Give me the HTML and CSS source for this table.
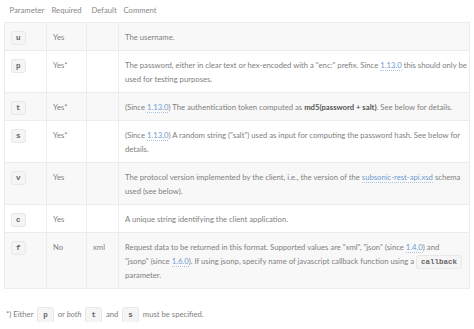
FILE: index.html
```html
<!DOCTYPE html>
<html lang="en">
<head>
    <meta charset="UTF-8">
    <link rel="stylesheet" href="styles.css">
    <title>Request parameters</title>
</head>
<body>
    <table class="params">
        <thead>
            <tr>
                <th class="col-param">Parameter</th>
                <th class="col-req">Required</th>
                <th class="col-def">Default</th>
                <th>Comment</th>
            </tr>
        </thead>
        <tbody>
            <tr>
                <td><code>u</code></td>
                <td>Yes</td>
                <td></td>
                <td>The username.</td>
            </tr>
            <tr>
                <td><code>p</code></td>
                <td>Yes*</td>
                <td></td>
                <td>The password, either in clear text or hex-encoded with a "enc:" prefix. Since <a href="#">1.13.0</a> this should only be used for testing purposes.</td>
            </tr>
            <tr>
                <td><code>t</code></td>
                <td>Yes*</td>
                <td></td>
                <td>(Since <a href="#">1.13.0</a>) The authentication token computed as <b>md5(password + salt)</b>. See below for details.</td>
            </tr>
            <tr>
                <td><code>s</code></td>
                <td>Yes*</td>
                <td></td>
                <td>(Since <a href="#">1.13.0</a>) A random string ("salt") used as input for computing the password hash. See below for details.</td>
            </tr>
            <tr>
                <td><code>v</code></td>
                <td>Yes</td>
                <td></td>
                <td>The protocol version implemented by the client, i.e., the version of the <a href="#">subsonic-rest-api.xsd</a> schema used (see below).</td>
            </tr>
            <tr>
                <td><code>c</code></td>
                <td>Yes</td>
                <td></td>
                <td>A unique string identifying the client application.</td>
            </tr>
            <tr>
                <td><code>f</code></td>
                <td>No</td>
                <td>xml</td>
                <td>Request data to be returned in this format. Supported values are "xml", "json" (since <a href="#">1.4.0</a>) and<br>"jsonp" (since <a href="#">1.6.0</a>). If using jsonp, specify name of javascript callback function using a <code>callback</code> parameter.</td>
            </tr>
        </tbody>
    </table>
    <p class="note">*) Either <code>p</code> or <i>both</i> <code>t</code> and <code>s</code> must be specified.</p>
</body>
</html>
```

FILE: styles.css
```css
*{
    margin: 0;
    padding: 0;
    box-sizing: border-box;
}
body{
    background: #fff;
    color: #808080;
    font-family: "Lato", "Noto Sans", sans-serif;
    font-size: 7.7px;
    line-height: 14px;
    padding: 0 4px;
}
.params{
    width: 466px;
    border-collapse: collapse;
    table-layout: fixed;
}
.params th{
    font-weight: 400;
    text-align: left;
    padding: 3px 5px 5px 5px;
    height: 22px;
    color: #888;
}
.col-param{ width: 42px; }
.col-req{ width: 40px; }
.col-def{ width: 32px; }
.params td{
    border: 1px solid #ececec;
    padding: 7px 6px 6px 6px;
    vertical-align: top;
}
.params td:last-child{
    padding-right: 2px;
}
.params tbody tr:nth-child(odd){
    background: #f8f8f8;
}
code{
    font-family: "Liberation Mono", monospace;
    font-weight: 700;
    font-size: 7.5px;
    line-height: 1;
    color: #666;
    background: #f5f5f5;
    border: 1px solid #e8e8e8;
    border-radius: 3px;
    padding: 2px 4px;
}
a{
    color: #6d9bd0;
    text-decoration: none;
    border-bottom: 1px dotted #a9c3e3;
}
b{
    color: #555;
}
.note{
    margin-top: 17px;
    padding-left: 2px;
    line-height: 16px;
}
.note code{
    padding: 3px 5px;
    margin: 0 2px;
}
```
